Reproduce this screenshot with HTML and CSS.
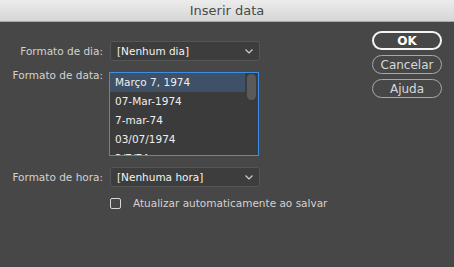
FILE: index.html
```html
<!DOCTYPE html>
<html lang="pt">
  <head>
    <meta charset="UTF-8" />
    <meta name="viewport" content="width=device-width, initial-scale=1.0" />
    <title>Inserir data</title>
    <link rel="stylesheet" href="styles.css">
  </head>
  <body>
    <div class="dialog">
      <div class="titlebar">Inserir data</div>
      <div class="content">
        <div class="form">
          <div class="row">
            <label class="label" for="dia">Formato de dia:</label>
            <div class="select" id="dia">
              <span>[Nenhum dia]</span>
              <svg class="chevron" width="8" height="5" viewBox="0 0 8 5">
                <polyline points="0.5,0.5 4,4 7.5,0.5" fill="none" stroke="#cfcfcf" stroke-width="1.2" />
              </svg>
            </div>
          </div>
          <div class="row row-top">
            <label class="label label-top">Formato de data:</label>
            <div class="list">
              <div class="items">
                <div class="item selected">Março 7, 1974</div>
                <div class="item">07-Mar-1974</div>
                <div class="item">7-mar-74</div>
                <div class="item">03/07/1974</div>
                <div class="item">3/7/74</div>
              </div>
              <div class="scrollbar"><div class="thumb"></div></div>
            </div>
          </div>
          <div class="row">
            <label class="label" for="hora">Formato de hora:</label>
            <div class="select" id="hora">
              <span>[Nenhuma hora]</span>
              <svg class="chevron" width="8" height="5" viewBox="0 0 8 5">
                <polyline points="0.5,0.5 4,4 7.5,0.5" fill="none" stroke="#cfcfcf" stroke-width="1.2" />
              </svg>
            </div>
          </div>
          <div class="check-row">
            <span class="checkbox"></span>
            <span>Atualizar automaticamente ao salvar</span>
          </div>
        </div>
        <div class="buttons">
          <button class="btn btn-default">OK</button>
          <button class="btn">Cancelar</button>
          <button class="btn">Ajuda</button>
        </div>
      </div>
    </div>
  </body>
</html>
```

FILE: styles.css
```css
* {
  margin: 0;
  padding: 0;
  box-sizing: border-box;
  font-family: "DejaVu Sans", "Liberation Sans", sans-serif;
}
body {
  width: 454px;
  height: 267px;
  overflow: hidden;
  background-color: #474747;
}
.dialog {
  display: flex;
  flex-direction: column;
  height: 100%;
}
.titlebar {
  height: 22px;
  line-height: 21px;
  text-align: center;
  font-size: 13px;
  color: #4a4a4a;
  background: linear-gradient(#ececec, #d6d6d6);
  border-bottom: 1px solid #a9a9a9;
}
.content {
  display: flex;
  flex: 1;
}
.form {
  display: flex;
  flex-direction: column;
  gap: 11px;
  padding-top: 19px;
}
.row {
  display: flex;
  align-items: center;
}
.row-top {
  align-items: flex-start;
}
.label {
  width: 110px;
  padding-right: 7px;
  text-align: right;
  font-size: 10.5px;
  color: #d2d2d2;
  white-space: nowrap;
}
.label-top {
  margin-top: -3px;
}
.select {
  display: flex;
  align-items: center;
  justify-content: space-between;
  width: 150px;
  height: 20px;
  padding: 0 6px 0 6px;
  background-color: #3d3d3d;
  border: 1px solid #555;
  border-radius: 3px;
  font-size: 10.5px;
  color: #f2f2f2;
}
.chevron {
  margin-top: 1px;
}
.list {
  display: flex;
  width: 150px;
  height: 84px;
  margin-left: -1px;
  border: 1px solid #3d8ee6;
  background-color: #3b3b3b;
  overflow: hidden;
}
.items {
  flex: 1;
}
.item {
  height: 19px;
  line-height: 19px;
  padding-left: 5px;
  font-size: 10.5px;
  color: #efefef;
}
.selected {
  background-color: #3e5167;
}
.scrollbar {
  width: 13px;
  padding: 1px 2px 0 2px;
}
.thumb {
  height: 26px;
  background-color: #5a5a5a;
  border-radius: 5px;
}
.check-row {
  display: flex;
  align-items: center;
  gap: 12px;
  margin-top: -1px;
  margin-left: 110px;
  font-size: 10.5px;
  color: #d2d2d2;
  white-space: nowrap;
}
.checkbox {
  width: 11px;
  height: 11px;
  border: 1px solid #d6d6d6;
  border-radius: 2px;
}
.buttons {
  display: flex;
  flex-direction: column;
  gap: 5px;
  margin-left: auto;
  padding-top: 9px;
  padding-right: 12px;
}
.btn {
  width: 70px;
  height: 19px;
  border: 1px solid #a8a8a8;
  border-radius: 10px;
  background: transparent;
  font-size: 12px;
  color: #d8d8d8;
}
.btn-default {
  border: 2px solid #f4f4f4;
  font-weight: 700;
  color: #fff;
}
```
